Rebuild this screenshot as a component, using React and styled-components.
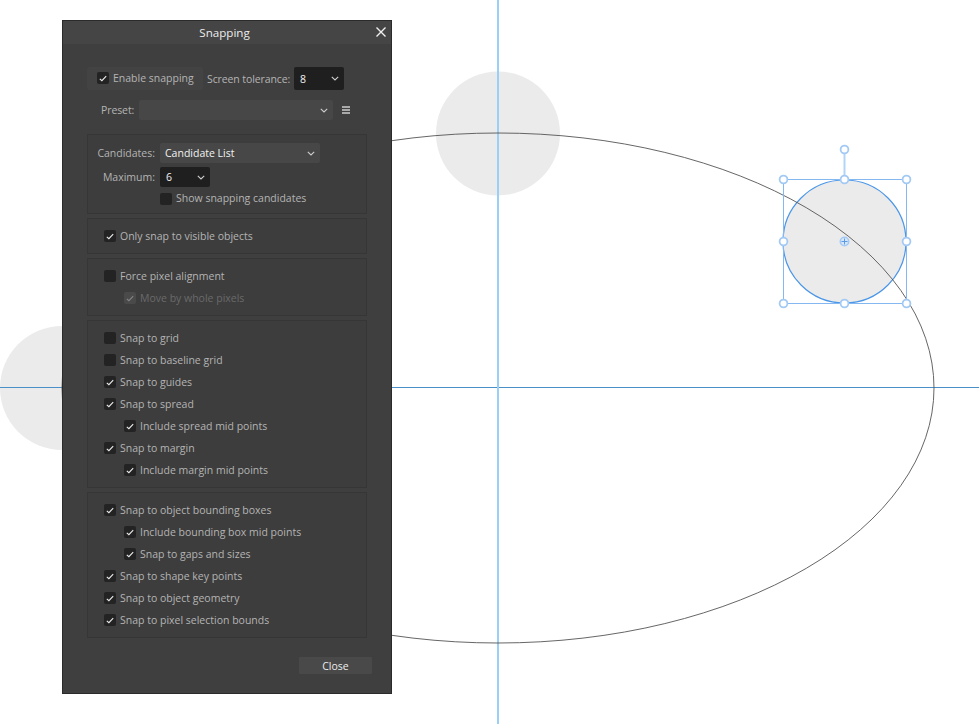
import styled, { createGlobalStyle } from "styled-components";

const GlobalStyle = createGlobalStyle`
  html, body {
    margin: 0;
    padding: 0;
    background: #fff;
  }
`;

const groups = [
  {
    id: "visible",
    height: 36,
    items: [{ label: "Only snap to visible objects", checked: true }],
  },
  {
    id: "pixel",
    height: 58,
    items: [
      { label: "Force pixel alignment" },
      { label: "Move by whole pixels", checked: true, sub: true, disabled: true },
    ],
  },
  {
    id: "page",
    height: 168,
    items: [
      { label: "Snap to grid" },
      { label: "Snap to baseline grid" },
      { label: "Snap to guides", checked: true },
      { label: "Snap to spread", checked: true },
      { label: "Include spread mid points", checked: true, sub: true },
      { label: "Snap to margin", checked: true },
      { label: "Include margin mid points", checked: true, sub: true },
    ],
  },
  {
    id: "objects",
    height: 146,
    items: [
      { label: "Snap to object bounding boxes", checked: true },
      { label: "Include bounding box mid points", checked: true, sub: true },
      { label: "Snap to gaps and sizes", checked: true, sub: true },
      { label: "Snap to shape key points", checked: true },
      { label: "Snap to object geometry", checked: true },
      { label: "Snap to pixel selection bounds", checked: true },
    ],
  },
];

const handles = [
  [783.5, 179.5],
  [844.5, 179.5],
  [906.5, 179.5],
  [783.5, 241.5],
  [906.5, 241.5],
  [783.5, 303.5],
  [844.5, 303.5],
  [906.5, 303.5],
  [844.5, 149.5],
];

function Tick() {
  return (
    <svg width="8" height="7" viewBox="0 0 8 7">
      <path d="M0.8 3.8 L2.9 5.7 L7.2 1.2" fill="none" stroke="currentColor" strokeWidth="1.1" />
    </svg>
  );
}

function Chevron() {
  return (
    <svg width="8" height="5" viewBox="0 0 8 5">
      <path d="M0.8 0.8 L4 3.9 L7.2 0.8" fill="none" stroke="#cfcfcf" strokeWidth="1.1" />
    </svg>
  );
}

function Check({ label, checked, sub, disabled }) {
  return (
    <CheckRow $sub={sub} $disabled={disabled}>
      <CheckBox $disabled={disabled}>{checked && <Tick />}</CheckBox>
      {label}
    </CheckRow>
  );
}

export default function App() {
  return (
    <>
      <GlobalStyle />
      <Canvas>
        <Drawing viewBox="0 0 979 724" width="979" height="724">
          <circle cx="498" cy="133.5" r="62" fill="#ebebeb" />
          <circle cx="62" cy="388" r="62" fill="#ebebeb" />
          <circle cx="844.5" cy="241.5" r="61.5" fill="#ebebeb" stroke="#4a96e8" strokeWidth="1.2" />
          <line x1="0" y1="387.5" x2="979" y2="387.5" stroke="#4a8fc8" strokeWidth="1" />
          <line x1="498" y1="0" x2="498" y2="724" stroke="#9ccff5" strokeWidth="2" />
          <ellipse cx="498" cy="388" rx="436" ry="255" fill="none" stroke="#555" strokeWidth="0.9" />
          <rect x="783.5" y="179.5" width="123" height="124" fill="none" stroke="#85b8f0" strokeWidth="1" />
          <line x1="844.5" y1="149.5" x2="844.5" y2="179.5" stroke="#b3d4f6" strokeWidth="2" />
          {handles.map(([x, y]) => (
            <circle key={`${x}-${y}`} cx={x} cy={y} r="3.9" fill="#fff" stroke="#a3caf4" strokeWidth="1.8" />
          ))}
          <circle cx="844.5" cy="241.5" r="4.2" fill="#d7e6f8" stroke="#a3caf4" strokeWidth="1.6" />
          <path d="M841.5 241.5 H847.5 M844.5 238.5 V244.5" stroke="#5a9ae6" strokeWidth="1" />
        </Drawing>

        <Dialog>
          <TitleBar>
            Snapping
            <CloseX viewBox="0 0 10 10">
              <path d="M0.5 0.5 L9.5 9.5 M9.5 0.5 L0.5 9.5" stroke="#f0f0f0" strokeWidth="1.4" fill="none" />
            </CloseX>
          </TitleBar>

          <Body>
            <TopRow>
              <EnableBox>
                <CheckBox>
                  <Tick />
                </CheckBox>
                Enable snapping
              </EnableBox>
              <ToleranceLabel>Screen tolerance:</ToleranceLabel>
              <Select $width="50px" $height="23px" $dark $indent="6px">
                8
                <Chevron />
              </Select>
            </TopRow>

            <PresetRow>
              <PresetLabel>Preset:</PresetLabel>
              <Select $width="194px" $height="20px" $end>
                <Chevron />
              </Select>
              <MenuLines>
                <span />
                <span />
                <span />
              </MenuLines>
            </PresetRow>

            <CandidateGroup>
              <FormRow>
                <FormLabel>Candidates:</FormLabel>
                <Select $width="160px" $height="20px">
                  Candidate List
                  <Chevron />
                </Select>
              </FormRow>
              <FormRow>
                <FormLabel>Maximum:</FormLabel>
                <Select $width="50px" $height="20px" $dark $indent="6px">
                  6
                  <Chevron />
                </Select>
              </FormRow>
              <ShowRow>
                <CheckBox />
                <ShowText>Show snapping candidates</ShowText>
              </ShowRow>
            </CandidateGroup>

            {groups.map((group) => (
              <Group key={group.id} $height={group.height}>
                {group.items.map((item) => (
                  <Check key={item.label} {...item} />
                ))}
              </Group>
            ))}

            <Footer>
              <CloseButton>Close</CloseButton>
            </Footer>
          </Body>
        </Dialog>
      </Canvas>
    </>
  );
}

const Canvas = styled.div`
  position: relative;
  width: 979px;
  height: 724px;
  overflow: hidden;
  background: #fff;
`;

const Drawing = styled.svg`
  position: absolute;
  top: 0;
  left: 0;
`;

const Dialog = styled.div`
  position: absolute;
  top: 20px;
  left: 62px;
  width: 328px;
  height: 672px;
  border: 1px solid #2a2a2a;
  background: #3f3f3f;
  font-family: "Open Sans", "Liberation Sans", sans-serif;
  font-size: 10.5px;
  color: #b4b4b4;
`;

const TitleBar = styled.div`
  position: relative;
  height: 23px;
  box-sizing: border-box;
  padding: 0 5px 0 0;
  display: flex;
  align-items: center;
  justify-content: center;
  background: #454545;
  color: #ececec;
  font-size: 11.6px;
`;

const CloseX = styled.svg`
  position: absolute;
  top: 6px;
  right: 5px;
  width: 10px;
  height: 10px;
`;

const Body = styled.div`
  padding: 23px 24px 0;
  display: flex;
  flex-direction: column;
`;

const TopRow = styled.div`
  display: flex;
  align-items: center;
  height: 23px;
`;

const EnableBox = styled.div`
  width: 116px;
  height: 23px;
  box-sizing: border-box;
  padding: 0 0 1px 10px;
  display: flex;
  align-items: center;
  gap: 4px;
  background: #434343;
  border-radius: 2px;
  margin-right: 4px;
`;

const ToleranceLabel = styled.span`
  width: 87px;
  letter-spacing: -0.1px;
  white-space: nowrap;
`;

const PresetRow = styled.div`
  display: flex;
  align-items: center;
  height: 20px;
  margin-top: 10px;
  padding-left: 14px;
`;

const PresetLabel = styled.span`
  width: 38px;
  letter-spacing: -0.1px;
`;

const Select = styled.div`
  width: ${(p) => p.$width};
  height: ${(p) => p.$height};
  box-sizing: border-box;
  padding: 0 5px 0 ${(p) => p.$indent || "5px"};
  display: flex;
  align-items: center;
  justify-content: ${(p) => (p.$end ? "flex-end" : "space-between")};
  border-radius: 2px;
  background: ${(p) => (p.$dark ? "#1f1f1f" : "#474747")};
  color: #f2f2f2;
`;

const MenuLines = styled.div`
  margin-left: 9px;
  width: 8px;
  display: flex;
  flex-direction: column;
  gap: 1px;

  span {
    height: 2px;
    background: #a8a8a8;
  }
`;

const groupBox = `
  box-sizing: border-box;
  border: 1px solid #363636;
  background: #3d3d3d;
`;

const CandidateGroup = styled.div`
  ${groupBox}
  height: 80px;
  margin-top: 14px;
  padding-top: 8px;
  display: flex;
  flex-direction: column;
`;

const FormRow = styled.div`
  display: flex;
  align-items: center;
  height: 20px;
  margin-bottom: 4px;
`;

const FormLabel = styled.span`
  width: 72px;
  padding-right: 5px;
  box-sizing: border-box;
  text-align: right;
`;

const ShowRow = styled.div`
  display: flex;
  align-items: center;
  gap: 4px;
  height: 13px;
  margin-top: 1px;
  padding-left: 72px;
`;

const ShowText = styled.span`
  margin-bottom: 2px;
`;

const Group = styled.div`
  ${groupBox}
  height: ${(p) => p.$height}px;
  margin-top: 4px;
  padding: 6px 0 0 16px;
  display: flex;
  flex-direction: column;
`;

const CheckRow = styled.div`
  display: flex;
  align-items: center;
  gap: 4px;
  height: 22px;
  margin-left: ${(p) => (p.$sub ? "20px" : "0")};
  color: ${(p) => (p.$disabled ? "#6a6a6a" : "#b4b4b4")};
`;

const CheckBox = styled.span`
  flex: none;
  width: 12px;
  height: 12px;
  display: flex;
  align-items: center;
  justify-content: center;
  border-radius: 2px;
  background: ${(p) => (p.$disabled ? "#4a4a4a" : "#232323")};
  color: ${(p) => (p.$disabled ? "#858585" : "#ededed")};
`;

const Footer = styled.div`
  display: flex;
  justify-content: flex-end;
  margin-top: 19px;
  margin-right: -5px;
`;

const CloseButton = styled.div`
  width: 73px;
  height: 17px;
  display: flex;
  align-items: center;
  justify-content: center;
  background: #494949;
  color: #ececec;
  border-radius: 1px;
`;
